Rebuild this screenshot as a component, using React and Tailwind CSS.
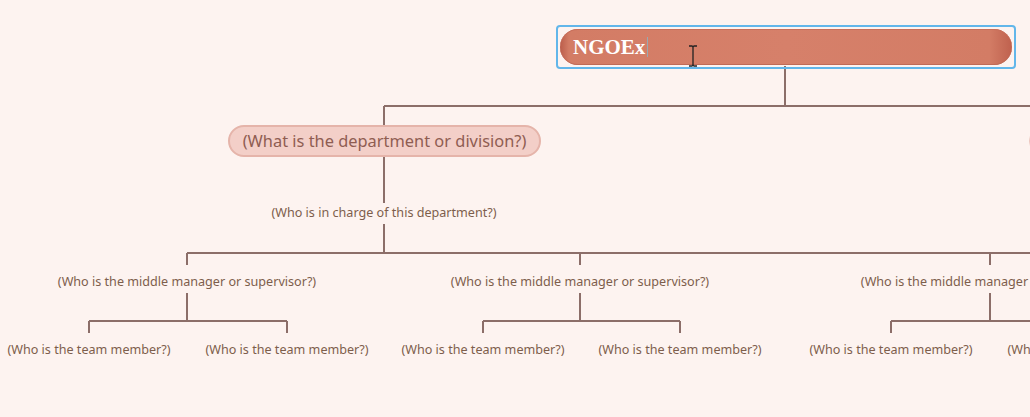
import React from "react";

const LINE = "#8c6e69";

const small = "absolute -translate-x-1/2 whitespace-nowrap text-[12.6px] text-[#7d5e4c] font-['Noto_Sans',sans-serif]";

const Label = ({ x, y, children }) => (
  <div className={small} style={{ left: x, top: y }}>
    {children}
  </div>
);

const App = () => {
  const managers = [
    { x: 187, kids: [89, 287] },
    { x: 580, kids: [483, 680] },
    { x: 990, kids: [891, 1089] },
  ];

  return (
    <div className="relative w-[1030px] h-[417px] overflow-hidden bg-[#fdf3f0]">
      {/* connectors */}
      <svg className="absolute inset-0" width="1030" height="417">
        <g stroke={LINE} strokeWidth="2" fill="none">
          <path d="M785 66 V106 M384 106 H1030 M384 106 V126" />
          <path d="M384 157 V203" />
          <path d="M384 224 V253 M187 253 H1030 M187 253 V265 M580 253 V265 M990 253 V265" />
          {managers.map((m) => (
            <path
              key={m.x}
              d={`M${m.x} 293 V321 M${m.kids[0]} 321 H${m.kids[1]} M${m.kids[0]} 321 V333 M${m.kids[1]} 321 V333`}
            />
          ))}
        </g>
      </svg>

      {/* root node, selected */}
      <div className="absolute left-[556px] top-[25px] w-[460px] h-[44px] rounded-[4px] border-2 border-[#62b6ea] p-[2px]">
        <div className="relative h-full rounded-full bg-[linear-gradient(to_right,#bb5d4b_0%,#d37c65_2%,#d6806a_50%,#d37c65_95%,#bf614e_100%)] shadow-[inset_0_-1px_0_#c06a56,inset_0_1px_0_#c86f5b]">
          <span className="absolute left-[13px] top-[4px] text-[21px] leading-[28px] font-bold text-white font-['Liberation_Serif',serif]">
            NGOEx
          </span>
          <span className="absolute left-[87px] top-[8px] w-px h-[20px] bg-[#9aa8b0]" />
        </div>
      </div>

      {/* mouse I-beam */}
      <svg className="absolute left-[688px] top-[45px]" width="10" height="22" viewBox="0 0 10 22">
        <path d="M1 1 H4 Q5 1 5 3 V19 Q5 21 4 21 H1 M9 1 H6 Q5 1 5 3 M5 19 Q5 21 6 21 H9" stroke="#222" strokeWidth="1.3" fill="none" />
      </svg>

      {/* department */}
      <div className="absolute left-[228px] top-[125px] w-[313px] h-[32px] rounded-full bg-[#f3cfc8] border-2 border-[#e5b4aa] flex items-center justify-center">
        <span className="text-[16.4px] text-[#8f5d52] whitespace-nowrap font-['Noto_Sans',sans-serif]">
          (What is the department or division?)
        </span>
      </div>
      <div className="absolute left-[1029px] top-[125px] w-[300px] h-[32px] rounded-full bg-[#f6dcd6] border border-[#ecc6be]" />

      <Label x={384} y={204}>(Who is in charge of this department?)</Label>

      {managers.map((m) => (
        <React.Fragment key={m.x}>
          <Label x={m.x} y={273}>(Who is the middle manager or supervisor?)</Label>
          {m.kids.map((k) => (
            <Label key={k} x={k} y={341}>(Who is the team member?)</Label>
          ))}
        </React.Fragment>
      ))}
    </div>
  );
};

export default App;
